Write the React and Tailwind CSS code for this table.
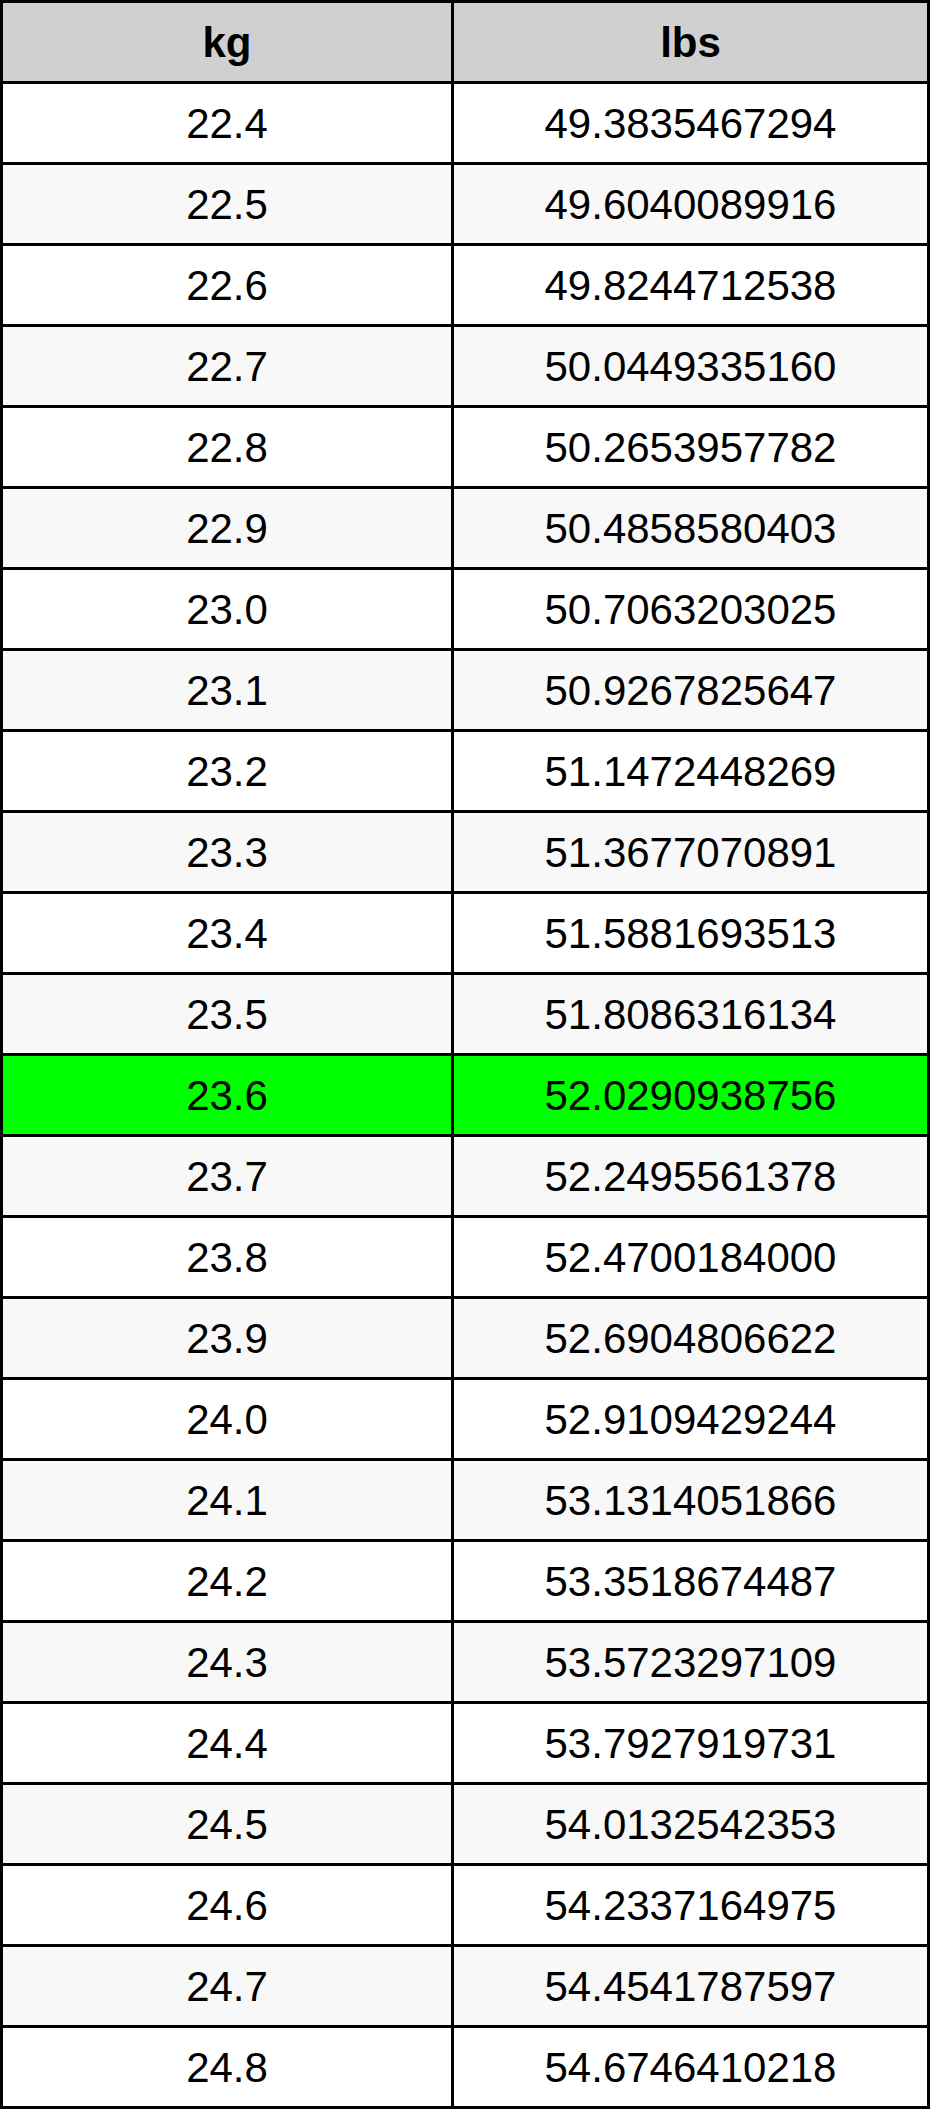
import React from 'react';

const rows = [
  ['22.4', '49.3835467294'],
  ['22.5', '49.6040089916'],
  ['22.6', '49.8244712538'],
  ['22.7', '50.0449335160'],
  ['22.8', '50.2653957782'],
  ['22.9', '50.4858580403'],
  ['23.0', '50.7063203025'],
  ['23.1', '50.9267825647'],
  ['23.2', '51.1472448269'],
  ['23.3', '51.3677070891'],
  ['23.4', '51.5881693513'],
  ['23.5', '51.8086316134'],
  ['23.6', '52.0290938756'],
  ['23.7', '52.2495561378'],
  ['23.8', '52.4700184000'],
  ['23.9', '52.6904806622'],
  ['24.0', '52.9109429244'],
  ['24.1', '53.1314051866'],
  ['24.2', '53.3518674487'],
  ['24.3', '53.5723297109'],
  ['24.4', '53.7927919731'],
  ['24.5', '54.0132542353'],
  ['24.6', '54.2337164975'],
  ['24.7', '54.4541787597'],
  ['24.8', '54.6746410218'],
];

const App = () => {
  return (
    <div className="w-[930px] bg-white font-['Liberation_Sans',Arial,sans-serif] text-black">
      <div className="grid grid-cols-[448px_473px] gap-[3px] bg-black p-[3px]">
        {/* header */}
        <div className="h-[78px] flex items-center justify-center bg-[#d0d0d0] text-[42px] font-bold">kg</div>
        <div className="h-[78px] flex items-center justify-center bg-[#d0d0d0] text-[42px] font-bold">lbs</div>

        {rows.map(([kg, lbs], i) => {
          const bg = kg === '23.6' ? 'bg-[#00ff00]' : i % 2 === 1 ? 'bg-[#f8f8f8]' : 'bg-white';
          return (
            <React.Fragment key={kg}>
              <div className={`h-[78px] flex items-center justify-center text-[42px] ${bg}`}>{kg}</div>
              <div className={`h-[78px] flex items-center justify-center text-[42px] ${bg}`}>{lbs}</div>
            </React.Fragment>
          );
        })}
      </div>
    </div>
  );
};

export default App;
